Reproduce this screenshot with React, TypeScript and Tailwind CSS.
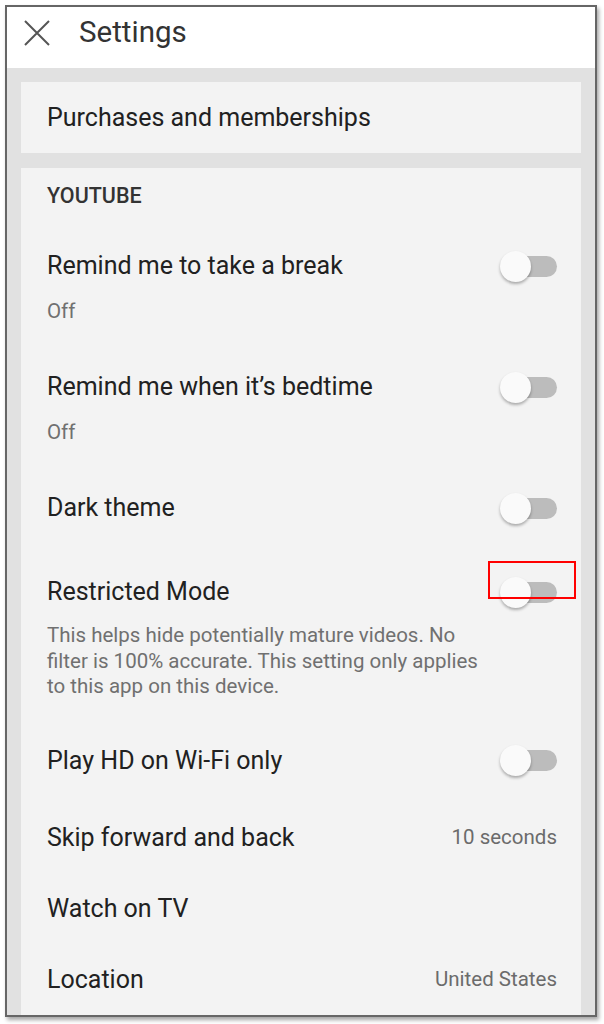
const FONT = { fontFamily: "Roboto, 'Noto Sans', sans-serif" };

function Toggle() {
  return (
    <div className="relative h-[31px] w-[57px] shrink-0">
      <div className="absolute left-[4px] right-0 top-[5px] h-[21px] rounded-full bg-[#bcbcbc]" />
      <div className="absolute left-0 top-0 h-[31px] w-[31px] rounded-full bg-[#fafafa] shadow-[0_2px_3px_rgba(0,0,0,0.3)]" />
    </div>
  );
}

function Row({
  title,
  sub,
  toggle,
  value,
  className,
}: {
  title: string;
  sub?: string;
  toggle?: boolean;
  value?: string;
  className?: string;
}) {
  return (
    <div className={className}>
      <div className="flex h-[30px] items-center justify-between">
        <span className="text-[25px] text-[#212121]">{title}</span>
        {toggle && <Toggle />}
        {value && <span className="text-[20.5px] text-[#6b6b6b]">{value}</span>}
      </div>
      {sub && <div className="mt-[18px] text-[20.5px] leading-[24px] text-[#707070]">{sub}</div>}
    </div>
  );
}

export default function App() {
  return (
    <div className="h-[1024px] w-[604px] bg-white pl-[5px] pt-[5px]" style={FONT}>
      <div className="flex h-[1012px] w-[592px] flex-col overflow-hidden border-2 border-[#666] bg-[#e1e1e1] shadow-[2px_3px_4px_rgba(0,0,0,0.35)]">
        <div className="flex h-[61px] shrink-0 items-center bg-white">
          <svg className="ml-[17px] mt-[-9px]" width="26" height="26" viewBox="0 0 26 26">
            <path d="M1 1L25 25M25 1L1 25" stroke="#555" strokeWidth="2" />
          </svg>
          <span className="ml-[29px] mt-[-10px] text-[29.5px] text-[#333]">Settings</span>
        </div>

        <div className="mx-[14px] mt-[14px] flex h-[71px] shrink-0 items-center bg-[#f3f3f3] px-[26px]">
          <span className="text-[25px] text-[#212121]">Purchases and memberships</span>
        </div>

        <div className="mx-[14px] mt-[15px] flex-1 bg-[#f3f3f3] pl-[26px] pr-[24px] pt-[16px]">
          <div className="h-[24px] text-[21.5px] font-medium leading-[24px] text-[#333]">YOUTUBE</div>
          <Row className="mt-[43px]" title="Remind me to take a break" sub="Off" toggle />
          <Row className="mt-[49px]" title="Remind me when it’s bedtime" sub="Off" toggle />
          <Row className="mt-[49px]" title="Dark theme" toggle />
          <div className="relative mt-[54px]">
            <Row title="Restricted Mode" toggle />
            <div className="absolute right-[-19px] top-[-16px] h-[38px] w-[88px] border-2 border-[#ff0000]" />
            <p className="mt-[16px] w-[440px] text-[20.5px] leading-[25.5px] text-[#707070]">
              This helps hide potentially mature videos. No filter is 100% accurate. This setting only applies to this app on this device.
            </p>
          </div>
          <Row className="mt-[46px]" title="Play HD on Wi-Fi only" toggle />
          <Row className="mt-[47px]" title="Skip forward and back" value="10 seconds" />
          <Row className="mt-[41px]" title="Watch on TV" />
          <Row className="mt-[41px]" title="Location" value="United States" />
        </div>
      </div>
    </div>
  );
}
